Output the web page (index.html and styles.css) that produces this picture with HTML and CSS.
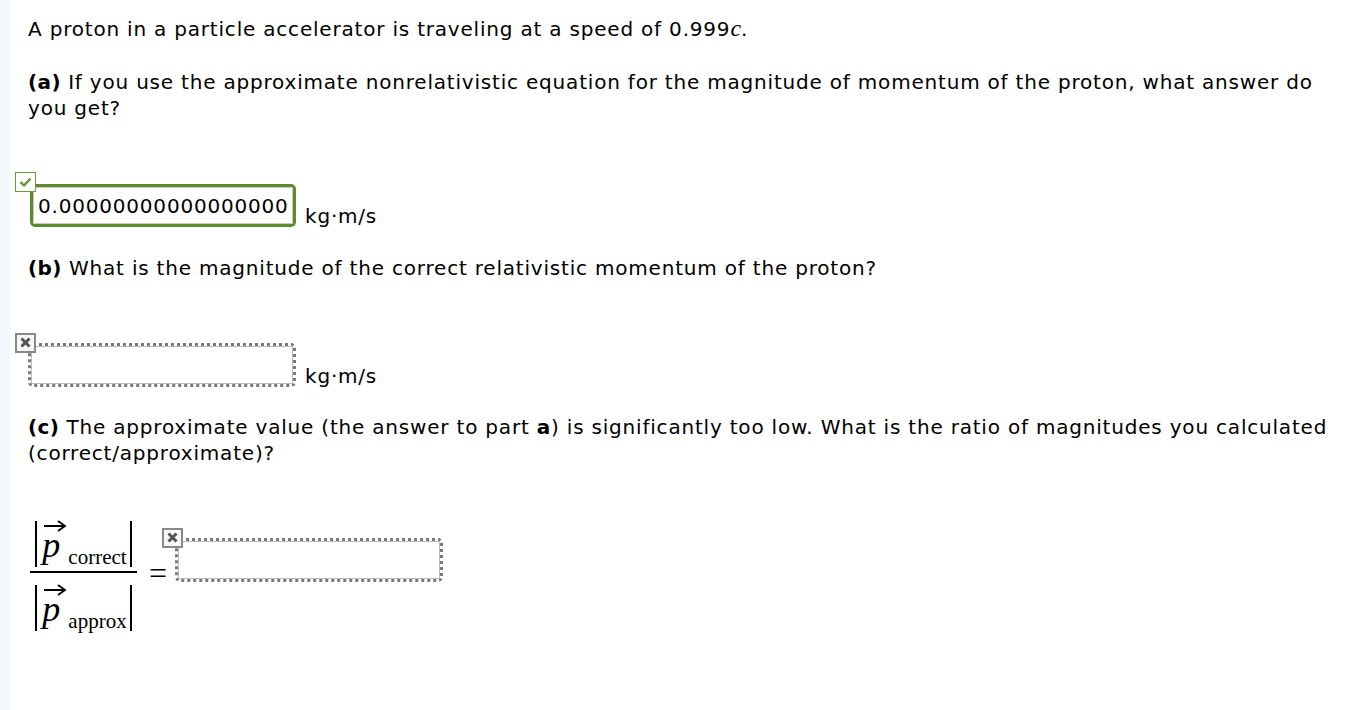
FILE: index.html
```html
<!DOCTYPE html>
<html lang="en">
<head>
<meta charset="utf-8">
<title>Relativistic momentum</title>
<link rel="stylesheet" href="styles.css">
</head>
<body>
<div class="page">
  <aside class="strip"></aside>
  <main class="content">
    <p class="q">A proton in a particle accelerator is traveling at a speed of 0.999<i class="c">c</i>.</p>

    <p class="q q-a"><b class="part">(a)</b> If you use the approximate nonrelativistic equation for the magnitude of momentum of the proton, what answer do you get?</p>

    <div class="answer-row row-a">
      <div class="field">
        <span class="mark mark-ok">
          <svg width="19" height="18" viewBox="0 0 19 18"><path d="M4.5 9 L8 12.5 L14.5 5.5" fill="none" stroke="#5b8f2c" stroke-width="2.2"/></svg>
        </span>
        <div class="box box-ok"><input class="box-input" type="text" value="0.00000000000000000045706" readonly></div>
      </div>
      <span class="unit">kg·m/s</span>
    </div>

    <p class="q q-b"><b class="part">(b)</b> What is the magnitude of the correct relativistic momentum of the proton?</p>

    <div class="answer-row row-b">
      <div class="field">
        <span class="mark mark-bad">
          <svg width="19" height="18" viewBox="0 0 19 18"><path d="M5.5 4.5 L13.5 12.5 M13.5 4.5 L5.5 12.5" fill="none" stroke="#555" stroke-width="3"/></svg>
        </span>
        <div class="box box-bad"><input class="box-input" type="text" value="" readonly></div>
      </div>
      <span class="unit">kg·m/s</span>
    </div>

    <p class="q q-c"><b class="part">(c)</b> The approximate value (the answer to part <b>a</b>) is significantly too low. What is the ratio of magnitudes you calculated (correct/approximate)?</p>

    <div class="ratio-row">
      <div class="frac">
        <div class="frac-part frac-num">
          <span class="abs-bar"></span>
          <span class="vec">
            <svg class="vec-arrow" width="24" height="14" viewBox="0 0 24 14"><path d="M1 7 H21 M15 2 L22 7 L15 12" fill="none" stroke="#000" stroke-width="1.8"/></svg>
            <span class="vec-p">p</span>
          </span>
          <span class="sub">correct</span>
          <span class="abs-bar"></span>
        </div>
        <div class="frac-line"></div>
        <div class="frac-part frac-den">
          <span class="abs-bar"></span>
          <span class="vec">
            <svg class="vec-arrow" width="24" height="14" viewBox="0 0 24 14"><path d="M1 7 H21 M15 2 L22 7 L15 12" fill="none" stroke="#000" stroke-width="1.8"/></svg>
            <span class="vec-p">p</span>
          </span>
          <span class="sub">approx</span>
          <span class="abs-bar"></span>
        </div>
      </div>
      <span class="equals">=</span>
      <div class="field field-c">
        <span class="mark mark-bad">
          <svg width="19" height="18" viewBox="0 0 19 18"><path d="M5.5 4.5 L13.5 12.5 M13.5 4.5 L5.5 12.5" fill="none" stroke="#555" stroke-width="3"/></svg>
        </span>
        <div class="box box-bad"><input class="box-input" type="text" value="" readonly></div>
      </div>
    </div>
  </main>
</div>
</body>
</html>
```

FILE: styles.css
```css
html, body {
  margin: 0;
  padding: 0;
  background: #ffffff;
}

body {
  font-family: "DejaVu Sans", Verdana, sans-serif;
  font-size: 20px;
  letter-spacing: 0.8px;
  color: #000;
}

.page {
  display: flex;
  min-height: 710px;
}

.strip {
  width: 10px;
  flex: 0 0 10px;
  background: #f4f8fc;
}

.content {
  flex: 1;
  padding: 15px 20px 0 18px;
}

.q {
  margin: 0;
  line-height: 26px;
}

.part {
  letter-spacing: 0.4px;
}

.c {
  font-family: "Liberation Serif", "Times New Roman", serif;
  font-size: 24px;
  letter-spacing: 0;
}

.q-a { margin-top: 27px; }
.q-b { margin-top: 28px; }
.q-c { margin-top: 27px; }

.answer-row {
  display: flex;
  align-items: flex-end;
}

.row-a { margin-top: 63px; }
.row-b { margin-top: 62px; }

.field {
  position: relative;
}

.row-a .field { margin-left: 2px; }

.mark {
  position: absolute;
  left: -15px;
  top: -12px;
  width: 19px;
  height: 18px;
  background: #fff;
  z-index: 2;
  display: flex;
}

.row-b .mark,
.field-c .mark {
  left: -13px;
  top: -10px;
}

.mark-ok {
  border: 1px solid #6a9a3a;
}

.mark-bad {
  border: 2px solid #888;
  width: 17px;
  height: 16px;
  background: #f7f7f7;
}

.mark-bad svg {
  margin: -1px;
}

.box {
  box-sizing: border-box;
  border-radius: 5px;
  display: flex;
}

.box-ok {
  width: 266px;
  height: 43px;
  border: 3px solid #5f8a2c;
}

.box-bad {
  width: 268px;
  height: 44px;
  border: 3px dotted #7a7a7a;
}

.box-input {
  flex: 1;
  min-width: 0;
  box-sizing: border-box;
  height: 100%;
  margin: 0;
  border: 1px solid #c8c8c8;
  border-radius: 0;
  padding: 0 4px;
  font-family: "DejaVu Sans", Verdana, sans-serif;
  font-size: 20px;
  letter-spacing: 0.8px;
  color: #000;
  background: #fff;
  outline: none;
}

.box-bad .box-input {
  border-color: #bbbbbb;
}

.unit {
  margin-left: 9px;
  line-height: 26px;
  margin-bottom: -2px;
}

/* ratio */
.ratio-row {
  display: flex;
  align-items: center;
  margin-top: 53px;
  margin-left: 2px;
  letter-spacing: 0;
}

.frac {
  display: flex;
  flex-direction: column;
  align-items: center;
  width: 107px;
}

.frac-part {
  display: flex;
  align-items: flex-end;
  height: 50px;
  font-family: "Liberation Serif", "Times New Roman", serif;
}

.abs-bar {
  align-self: stretch;
  width: 2px;
  background: #000;
  margin: 2px 0;
}

.vec {
  position: relative;
  font-size: 36px;
  line-height: 40px;
  margin-left: 5px;
  margin-bottom: 4px;
}

.vec-p {
  font-family: "Liberation Serif", "Times New Roman", serif;
  font-style: italic;
}

.vec-arrow {
  position: absolute;
  left: 1px;
  top: -6px;
}

.sub {
  font-size: 21px;
  line-height: 24px;
  margin-left: 8px;
  margin-right: 3px;
}

.frac-line {
  width: 107px;
  height: 2px;
  background: #000;
  margin: 2px 0 10px;
}

.equals {
  font-family: "Liberation Serif", "Times New Roman", serif;
  font-size: 32px;
  line-height: 32px;
  margin-left: 12px;
  margin-top: -6px;
}

.field-c {
  align-self: flex-start;
  margin-top: 19px;
  margin-left: 8px;
}
```
